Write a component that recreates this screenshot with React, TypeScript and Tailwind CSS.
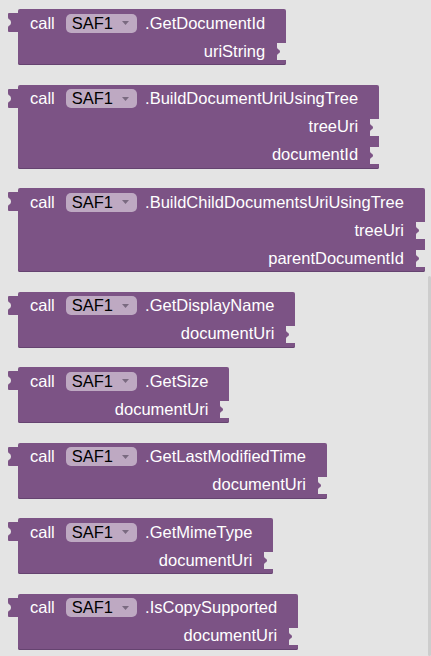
import React from 'react';

interface BlockDef {
  method: string;
  args: string[];
}

const blocks: BlockDef[] = [
  { method: 'GetDocumentId', args: ['uriString'] },
  { method: 'BuildDocumentUriUsingTree', args: ['treeUri', 'documentId'] },
  { method: 'BuildChildDocumentsUriUsingTree', args: ['treeUri', 'parentDocumentId'] },
  { method: 'GetDisplayName', args: ['documentUri'] },
  { method: 'GetSize', args: ['documentUri'] },
  { method: 'GetLastModifiedTime', args: ['documentUri'] },
  { method: 'GetMimeType', args: ['documentUri'] },
  { method: 'IsCopySupported', args: ['documentUri'] },
];

// male output tab on the left of the block
const OutputTab = () => (
  <svg width="10" height="19" viewBox="0 0 10 19" className="mt-[4px] shrink-0">
    <path d="M10 0 H1 Q0 0 0 1 V4 C0 7 3 6 3 9.5 C3 13 0 12 0 15 V18 Q0 19 1 19 H10 Z" fill="#7c5385" />
  </svg>
);

// female input socket cut into the right edge
const Socket = () => (
  <svg width="9" height="17" viewBox="0 0 9 17" className="absolute right-0 top-[6px]">
    <path d="M0 0 H9 V17 H0 V13 C0 10 3 11 3 8.5 C3 6 0 7 0 4 Z" fill="#e4e4e4" />
  </svg>
);

const CallBlock: React.FC<{ block: BlockDef }> = ({ block }) => (
  <div className="flex items-start">
    <OutputTab />
    <div className="flex flex-col rounded-[2px] bg-[#7c5385] pl-[12px] pr-[21px] text-white shadow-[inset_0_-1px_0_#654370]">
      <div className="flex h-[28px] items-center whitespace-nowrap">
        <span>call</span>
        <div className="ml-[11px] flex h-[19px] items-center rounded-[5px] bg-[#bea9c2] pl-[6px] pr-[8px] text-black">
          <span>SAF1</span>
          <svg width="7" height="4" viewBox="0 0 7 4" className="ml-[9px]">
            <path d="M0 0 H7 L3.5 4 Z" fill="#7a6a80" />
          </svg>
        </div>
        <span className="ml-[8px]">.{block.method}</span>
      </div>
      {block.args.map((arg) => (
        <div key={arg} className="relative -mr-[21px] flex h-[28px] items-center justify-end whitespace-nowrap pr-[21px]">
          <span>{arg}</span>
          <Socket />
        </div>
      ))}
    </div>
  </div>
);

export default function App() {
  return (
    <div
      className="relative h-[656px] w-full overflow-hidden bg-[#e4e4e4] text-[16.5px] leading-none"
      style={{ fontFamily: '"Liberation Sans", Arial, sans-serif' }}
    >
      <div className="flex flex-col items-start gap-[19.5px] pl-[8px] pt-[9px]">
        {blocks.map((b) => (
          <CallBlock key={b.method} block={b} />
        ))}
      </div>
      <div className="absolute right-0 top-[276px] h-[380px] w-[3px] rounded-full bg-[#cdcdcd]" />
    </div>
  );
}
